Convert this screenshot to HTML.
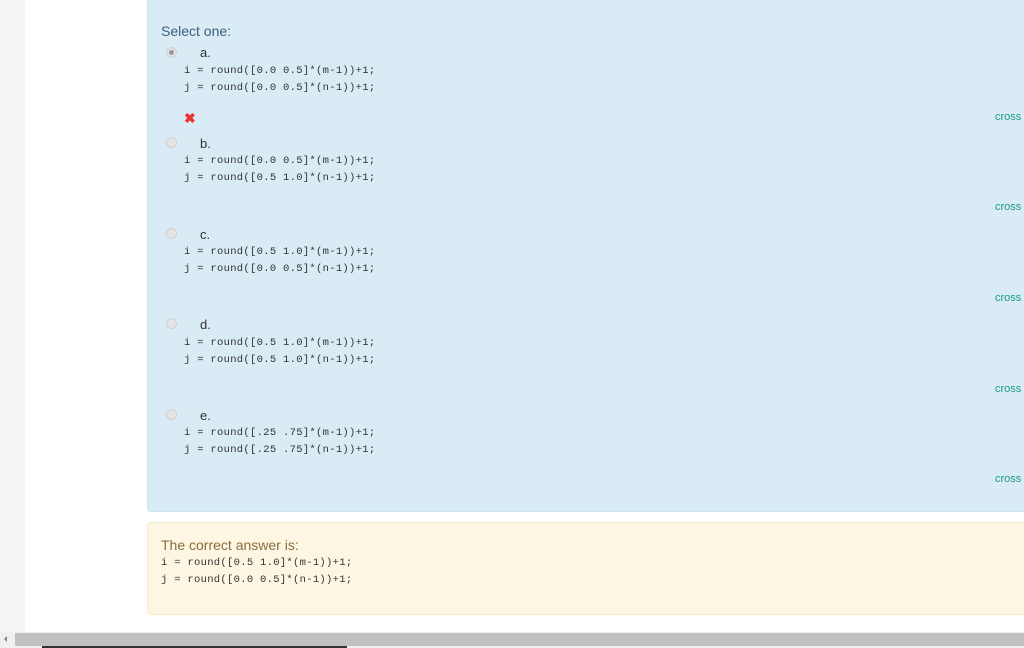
<!DOCTYPE html>
<html><head><style>
body{margin:0;width:1024px;height:648px;overflow:hidden;background:#fff;position:relative;font-family:"Liberation Sans",sans-serif}
.a{position:absolute}
.code{font-family:"Liberation Mono",monospace;font-size:10.5px;color:#333;white-space:pre;letter-spacing:0.3px}
.r{width:11px;height:11px;border-radius:50%;background:#e4e4e4;border:1px solid #d0d0d0;box-sizing:border-box}
.lbl{font-size:13px;color:#333}
.cr{font-size:11px;color:#1a9a8a;left:995px}
</style></head><body>
<div class="a" style="left:0;top:0;width:25px;height:632px;background:#f4f4f4"></div>
<div class="a" style="left:147px;top:-5px;width:890px;height:515px;background:#d9ecf6;border:1px solid #cde3ef;border-radius:4px"></div>
<div class="a" style="left:147px;top:522px;width:890px;height:91px;background:#fcf6e2;border:1px solid #f5ecc9;border-radius:4px"></div>
<div class="a" style="left:161px;top:23px;font-size:14px;color:#3a5f7a">Select one:</div>

<div class="a r" style="left:166px;top:47px"><div style="width:5px;height:5px;background:#999;border-radius:50%;margin:2px"></div></div>
<div class="a lbl" style="left:200px;top:45px">a.</div>
<div class="a code" style="left:184px;top:65px">i = round([0.0 0.5]*(m-1))+1;</div>
<div class="a code" style="left:184px;top:82px">j = round([0.0 0.5]*(n-1))+1;</div>
<div class="a" style="left:184px;top:110px;color:#e33;font-size:14px;font-weight:bold">✖</div>
<div class="a cr" style="top:111px">cross</div>

<div class="a r" style="left:166px;top:137px"></div>
<div class="a lbl" style="left:200px;top:136px">b.</div>
<div class="a code" style="left:184px;top:155px">i = round([0.0 0.5]*(m-1))+1;</div>
<div class="a code" style="left:184px;top:172px">j = round([0.5 1.0]*(n-1))+1;</div>
<div class="a cr" style="top:201px">cross</div>

<div class="a r" style="left:166px;top:228px"></div>
<div class="a lbl" style="left:200px;top:227px">c.</div>
<div class="a code" style="left:184px;top:246px">i = round([0.5 1.0]*(m-1))+1;</div>
<div class="a code" style="left:184px;top:263px">j = round([0.0 0.5]*(n-1))+1;</div>
<div class="a cr" style="top:292px">cross</div>

<div class="a r" style="left:166px;top:318px"></div>
<div class="a lbl" style="left:200px;top:317px">d.</div>
<div class="a code" style="left:184px;top:337px">i = round([0.5 1.0]*(m-1))+1;</div>
<div class="a code" style="left:184px;top:354px">j = round([0.5 1.0]*(n-1))+1;</div>
<div class="a cr" style="top:383px">cross</div>

<div class="a r" style="left:166px;top:409px"></div>
<div class="a lbl" style="left:200px;top:408px">e.</div>
<div class="a code" style="left:184px;top:427px">i = round([.25 .75]*(m-1))+1;</div>
<div class="a code" style="left:184px;top:444px">j = round([.25 .75]*(n-1))+1;</div>
<div class="a cr" style="top:473px">cross</div>

<div class="a" style="left:161px;top:537px;font-size:14px;color:#8a6d3b">The correct answer is:</div>
<div class="a code" style="left:161px;top:557px">i = round([0.5 1.0]*(m-1))+1;</div>
<div class="a code" style="left:161px;top:574px">j = round([0.0 0.5]*(n-1))+1;</div>

<div class="a" style="left:0;top:632px;width:1024px;height:16px;background:#f0f0f0"></div>
<div class="a" style="left:15px;top:633px;width:1009px;height:13px;background:#c1c1c1"></div>
<div class="a" style="left:4px;top:636px;width:0;height:0;border-top:3px solid transparent;border-bottom:3px solid transparent;border-right:3px solid #888"></div>
<div class="a" style="left:42px;top:646px;width:305px;height:2px;background:#333"></div>
</body></html>
